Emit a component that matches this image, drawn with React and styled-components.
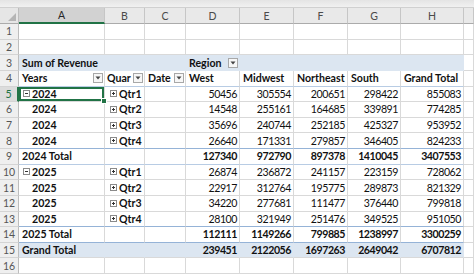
import React from "react";
import styled, { createGlobalStyle, css } from "styled-components";

const GlobalStyle = createGlobalStyle`
  html, body { margin: 0; padding: 0; background: #ffffff; }
  body { width: 474px; height: 274px; overflow: hidden; font-family: Lato, "Liberation Sans", sans-serif; }
`;

const COLS = "19px 86px 40px 41px 54px 54px 54px 53px 63px 1fr";
const GRID = "#d9d9d9";
const FILL = "#dce6f1";
const BLUE = "#95b3d7";
const LIGHTBLUE = "#b8cce4";
const GREEN = "#217346";

const Sheet = styled.div`
  display: flex;
  flex-direction: column;
  width: 474px;
  height: 274px;
  overflow: hidden;
  color: #111;
  font-size: 10.6px;
`;

const TopStrip = styled.div`
  height: 8px;
  background: linear-gradient(#e4e4e4, #f1f1f1);
  border-bottom: 1px solid #d0d0d0;
  box-sizing: border-box;
`;

const GridRow = styled.div`
  display: grid;
  grid-template-columns: ${COLS};
  height: ${(p) => p.$h}px;
  flex: none;
`;

const Corner = styled.div`
  background: #e6e6e6;
  border-right: 1px solid #bdbdbd;
  border-bottom: 1px solid #ababab;
  box-sizing: border-box;
  display: flex;
  align-items: flex-end;
  justify-content: flex-end;
  padding: 0 2px 2px 0;
`;

const CornerTri = styled.svg`
  width: 8px;
  height: 8px;
  display: block;
`;

const ColHead = styled.div`
  display: flex;
  align-items: center;
  justify-content: center;
  box-sizing: border-box;
  font-size: 10.5px;
  color: #4a4a4a;
  background: #e9e9e9;
  border-right: 1px solid #c6c6c6;
  border-bottom: 1px solid #ababab;
  ${(p) =>
    p.$active &&
    css`
      background: #d2d2d2;
      color: #262626;
      border-bottom: 2px solid ${GREEN};
    `}
`;

const RowHead = styled.div`
  display: flex;
  align-items: center;
  justify-content: center;
  box-sizing: border-box;
  font-size: 10.5px;
  color: #555;
  background: #efefef;
  border-right: 1px solid #bdbdbd;
  border-bottom: 1px solid #d4d4d4;
  ${(p) =>
    p.$active &&
    css`
      background: #dcdcdc;
      color: ${GREEN};
      border-right: 2px solid ${GREEN};
    `}
`;

const Cell = styled.div`
  position: relative;
  display: flex;
  align-items: center;
  justify-content: ${(p) => (p.$right ? "flex-end" : "flex-start")};
  box-sizing: border-box;
  min-width: 0;
  padding: 0 ${(p) => (p.$right ? "2px" : "0")} 0 ${(p) => p.$pl ?? 3}px;
  white-space: nowrap;
  font-weight: ${(p) => (p.$bold ? 700 : 400)};
  background: ${(p) => (p.$fill ? FILL : "#fff")};
  border-right: 1px solid ${(p) => (p.$fill ? FILL : GRID)};
  border-bottom: 1px solid ${(p) => p.$bottom || GRID};
  ${(p) =>
    p.$selected &&
    css`
      box-shadow: inset 0 0 0 2px ${GREEN};
      &::after {
        content: "";
        position: absolute;
        right: -3px;
        bottom: -3px;
        width: 4px;
        height: 4px;
        background: ${GREEN};
        border: 1px solid #fff;
        z-index: 2;
      }
    `}
`;

const Label = styled.span`
  flex: 1 1 auto;
  min-width: 0;
  white-space: nowrap;
`;

const Num = styled.span`
  letter-spacing: -0.45px;
`;

const DropBtn = styled.span`
  flex: none;
  width: 10px;
  height: 10px;
  margin-right: 1px;
  box-sizing: border-box;
  border: 1px solid #a8a8a8;
  background: #f7f7f7;
  display: flex;
  align-items: center;
  justify-content: center;
`;

const Caret = styled.svg`
  width: 6px;
  height: 4px;
  display: block;
`;

const ExpandBox = styled.svg`
  flex: none;
  width: 7px;
  height: 7px;
  margin-right: 2px;
  display: block;
`;

const Indent = styled.span`
  display: inline-block;
  width: ${(p) => p.$w}px;
  flex: none;
`;

function Drop() {
  return (
    <DropBtn>
      <Caret viewBox="0 0 6 4">
        <path d="M0.5 0.5 L5.5 0.5 L3 3.5 Z" fill="#444" />
      </Caret>
    </DropBtn>
  );
}

function Expander({ minus }) {
  return (
    <ExpandBox viewBox="0 0 7 7">
      <rect x="0.5" y="0.5" width="6" height="6" fill="#fff" stroke="#8a8a8a" />
      <line x1="2" y1="3.5" x2="5" y2="3.5" stroke="#333" />
      {!minus && <line x1="3.5" y1="2" x2="3.5" y2="5" stroke="#333" />}
    </ExpandBox>
  );
}

const LETTERS = ["A", "B", "C", "D", "E", "F", "G", "H", ""];

const data = [
  { year: "2024", first: true, q: "Qtr1", v: [50456, 305554, 200651, 298422, 855083] },
  { year: "2024", q: "Qtr2", v: [14548, 255161, 164685, 339891, 774285] },
  { year: "2024", q: "Qtr3", v: [35696, 240744, 252185, 425327, 953952] },
  { year: "2024", q: "Qtr4", v: [26640, 171331, 279857, 346405, 824233], before: true },
  { total: "2024 Total", v: [127340, 972790, 897378, 1410045, 3407553] },
  { year: "2025", first: true, q: "Qtr1", v: [26874, 236872, 241157, 223159, 728062] },
  { year: "2025", q: "Qtr2", v: [22917, 312764, 195775, 289873, 821329] },
  { year: "2025", q: "Qtr3", v: [34220, 277681, 111477, 376440, 799818] },
  { year: "2025", q: "Qtr4", v: [28100, 321949, 251476, 349525, 951050], before: true },
  { total: "2025 Total", v: [112111, 1149266, 799885, 1238997, 3300259], before: true },
  { grand: "Grand Total", v: [239451, 2122056, 1697263, 2649042, 6707812] },
];

const RH = 15.625;

function EmptyRow({ n }) {
  return (
    <GridRow $h={RH}>
      <RowHead>{n}</RowHead>
      {LETTERS.map((l, i) => (
        <Cell key={i} />
      ))}
    </GridRow>
  );
}

function DataRow({ n, r }) {
  const bottom = r.before ? BLUE : r.total ? LIGHTBLUE : undefined;
  const fill = !!r.grand;
  const bold = !!(r.total || r.grand);
  const selected = n === 5;
  return (
    <GridRow $h={RH}>
      <RowHead $active={selected}>{n}</RowHead>
      {r.year ? (
        <Cell $bottom={bottom} $bold $selected={selected} $pl={4}>
          {r.first ? <Expander minus /> : <Indent $w={9} />}
          <Label>{r.year}</Label>
        </Cell>
      ) : (
        <Cell $bottom={bottom} $bold $fill={fill}>
          <Label>{r.total || r.grand}</Label>
        </Cell>
      )}
      {r.q ? (
        <Cell $bottom={bottom} $bold $pl={5}>
          <Expander />
          <Label>{r.q}</Label>
        </Cell>
      ) : (
        <Cell $bottom={bottom} $fill={fill} />
      )}
      <Cell $bottom={bottom} $fill={fill} />
      {r.v.map((x, i) => (
        <Cell key={i} $right $bold={bold} $fill={fill} $bottom={bottom}>
          <Num>{x}</Num>
        </Cell>
      ))}
      <Cell />
    </GridRow>
  );
}

export default function App() {
  return (
    <>
      <GlobalStyle />
      <Sheet>
        <TopStrip />
        <GridRow $h={16}>
          <Corner>
            <CornerTri viewBox="0 0 8 8">
              <path d="M8 0 L8 8 L0 8 Z" fill="#b5b5b5" />
            </CornerTri>
          </Corner>
          {LETTERS.map((l, i) => (
            <ColHead key={i} $active={i === 0}>
              {l}
            </ColHead>
          ))}
        </GridRow>
        <EmptyRow n={1} />
        <EmptyRow n={2} />
        <GridRow $h={RH}>
          <RowHead>3</RowHead>
          <Cell $fill $bold $bottom={FILL}>
            <Label>Sum of Revenue</Label>
          </Cell>
          <Cell $fill $bottom={FILL} />
          <Cell $fill $bottom={FILL} />
          <Cell $fill $bold $bottom={FILL}>
            <Label>Region</Label>
            <Drop />
          </Cell>
          <Cell $fill $bottom={FILL} />
          <Cell $fill $bottom={FILL} />
          <Cell $fill $bottom={FILL} />
          <Cell $fill $bottom={FILL} />
          <Cell />
        </GridRow>
        <GridRow $h={RH}>
          <RowHead>4</RowHead>
          <Cell $bold $bottom={LIGHTBLUE}>
            <Label>Years</Label>
            <Drop />
          </Cell>
          <Cell $bold $bottom={LIGHTBLUE} $pl={2}>
            <Label>Quar</Label>
            <Drop />
          </Cell>
          <Cell $bold $bottom={LIGHTBLUE}>
            <Label>Date</Label>
            <Drop />
          </Cell>
          {["West", "Midwest", "Northeast", "South", "Grand Total"].map((h) => (
            <Cell key={h} $bold $bottom={LIGHTBLUE}>
              <Label>{h}</Label>
            </Cell>
          ))}
          <Cell />
        </GridRow>
        {data.map((r, i) => (
          <DataRow key={i} n={i + 5} r={r} />
        ))}
        <EmptyRow n={16} />
      </Sheet>
    </>
  );
}
